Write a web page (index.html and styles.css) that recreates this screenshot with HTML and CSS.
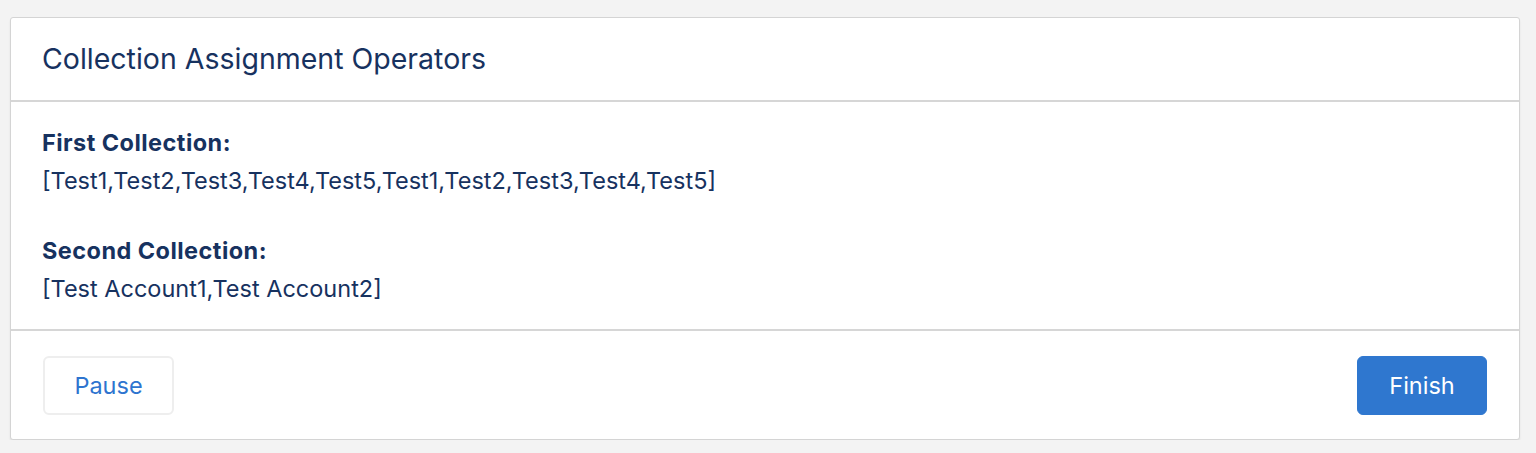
FILE: index.html
```html
<!DOCTYPE html>
<html lang="en">
<head>
<meta charset="utf-8">
<title>Collection Assignment Operators</title>
<link rel="stylesheet" href="styles.css">
</head>
<body>
<div class="card">
  <div class="card-header">
    <h1 class="title">Collection Assignment Operators</h1>
  </div>
  <div class="card-body">
    <div class="field">
      <div class="label">First Collection:</div>
      <div class="value">[Test1,Test2,Test3,Test4,Test5,Test1,Test2,Test3,Test4,Test5]</div>
    </div>
    <div class="field">
      <div class="label">Second Collection:</div>
      <div class="value">[Test Account1,Test Account2]</div>
    </div>
  </div>
  <div class="card-footer">
    <button class="btn btn-neutral">Pause</button>
    <button class="btn btn-brand">Finish</button>
  </div>
</div>
</body>
</html>
```
FILE: styles.css
```css
html, body {
  margin: 0;
  padding: 0;
  background: #f3f3f3;
}
body {
  padding: 17px 16px 0 10px;
  font-family: Inter, "Noto Sans", sans-serif;
  color: #17325f;
}
.card {
  background: #fff;
  border: 1px solid #d4d4d4;
  border-radius: 3px;
  box-shadow: 0 2px 2px rgba(0,0,0,0.08);
  height: 423px;
  box-sizing: border-box;
  display: flex;
  flex-direction: column;
}
.card-header {
  height: 84px;
  flex: none;
  box-sizing: border-box;
  border-bottom: 2px solid #d6d6d6;
  display: flex;
  align-items: center;
  padding-left: 31px;
}
.title {
  margin: 0;
  font-size: 28.5px;
  font-weight: 400;
  line-height: 34px;
}
.card-body {
  height: 229px;
  flex: none;
  box-sizing: border-box;
  border-bottom: 2px solid #d6d6d6;
  padding: 27px 31px 0;
  display: flex;
  flex-direction: column;
  gap: 42px;
}
.label {
  font-size: 23.5px;
  font-weight: 700;
  letter-spacing: 0.45px;
  line-height: 28px;
}
.value {
  font-size: 23.5px;
  line-height: 28px;
  margin-top: 10px;
}
.card-footer {
  flex: 1;
  display: flex;
  align-items: center;
  justify-content: space-between;
  padding: 0 32px 0 32px;
}
.btn {
  height: 59px;
  width: 131px;
  border-radius: 6px;
  font-family: Inter, "Noto Sans", sans-serif;
  font-size: 23.5px;
  cursor: pointer;
}
.btn-neutral {
  background: #fff;
  border: 2px solid #eeeeee;
  color: #2e74cf;
}
.btn-brand {
  width: 130px;
  background: #2f77cf;
  border: 1px solid #2f77cf;
  color: #fff;
}
```
